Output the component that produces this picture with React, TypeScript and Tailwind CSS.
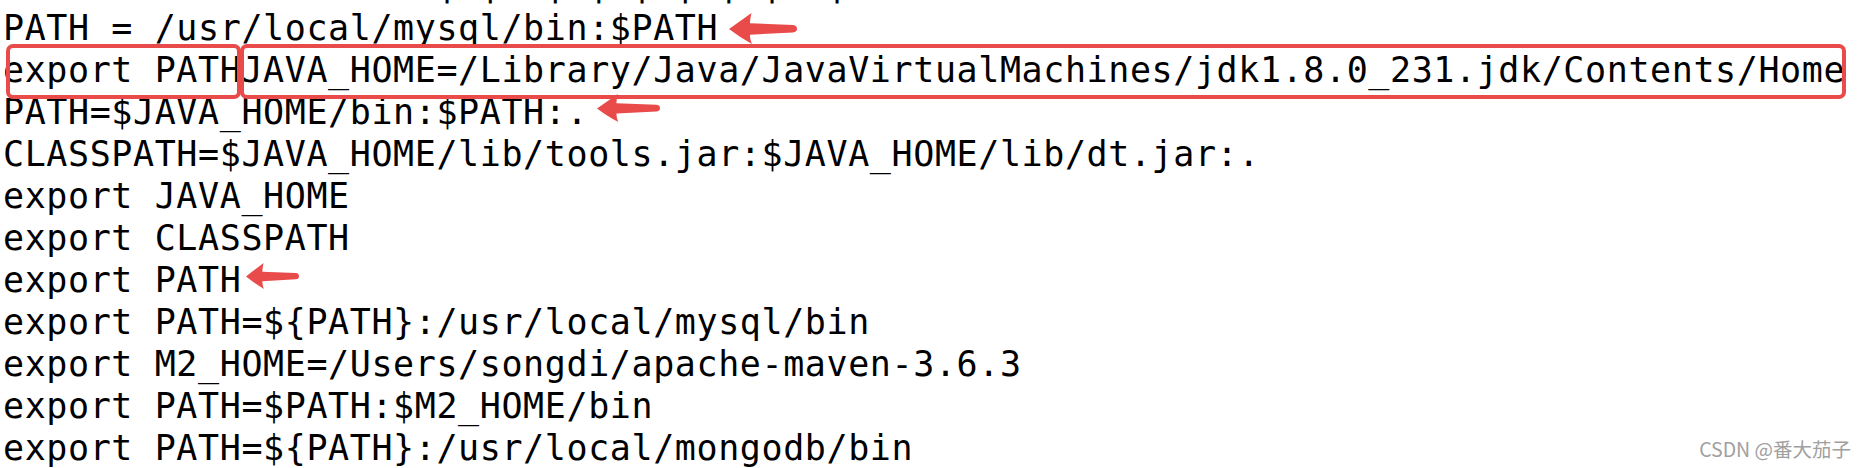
import React from "react";

const RED = "#e94b4b";

const Arrow: React.FC<{ w: number; h: number; className?: string }> = ({ w, h, className }) => (
  <svg
    width={w}
    height={h}
    viewBox="0 0 68 28"
    preserveAspectRatio="none"
    className={className}
  >
    <path
      d="M0 14.5 C7.5 9.5 15 5 22.5 0 C21.5 4 21 7 21 9.3 L64 10.8 Q68 11.2 68 14.2 Q68 17.2 64 17.6 L21 19.6 C21 22.2 21.5 25 23 28 C15 24 7.5 19.5 0 14.5 Z"
      fill={RED}
    />
  </svg>
);

// top line only shows its descenders, the rest is cut off by the frame
const cutLine = "                    | |  | | | | | |  |";

const App: React.FC = () => {
  return (
    <div className="relative h-[468px] w-[1866px] overflow-hidden bg-white text-black">
      <div className="-mt-[41px] whitespace-pre pl-[3px] font-['DejaVu_Sans_Mono',monospace] text-[35px] leading-[42px] tracking-[0.6px]">
        <div className="leading-[48px]">{cutLine}</div>
        <div>
          PATH = /usr/local/mysql/bin:$PATH
          <Arrow w={68} h={31} className="ml-[11px] inline-block align-[-4px]" />
        </div>
        <div>
          <span className="relative">
            export PATH
            <span className="absolute -top-[6px] -bottom-[9px] left-[3px] right-0 rounded-[7px] border-[4px] border-[#e94b4b]" />
          </span>
          <span className="relative">
            JAVA_HOME=/Library/Java/JavaVirtualMachines/jdk1.8.0_231.jdk/Contents/Home
            <span className="absolute -top-[6px] -bottom-[9px] -left-[1px] -right-[1px] rounded-[7px] border-[4px] border-[#e94b4b]" />
          </span>
        </div>
        <div>
          PATH=$JAVA_HOME/bin:$PATH:.
          <Arrow w={63} h={28} className="ml-[9px] inline-block align-[2px]" />
        </div>
        <div>CLASSPATH=$JAVA_HOME/lib/tools.jar:$JAVA_HOME/lib/dt.jar:.</div>
        <div>export JAVA_HOME</div>
        <div>export CLASSPATH</div>
        <div>
          export PATH
          <Arrow w={53} h={26} className="ml-[5px] inline-block align-[3px]" />
        </div>
        <div>export PATH=${"{"}PATH{"}"}:/usr/local/mysql/bin</div>
        <div>export M2_HOME=/Users/songdi/apache-maven-3.6.3</div>
        <div>export PATH=$PATH:$M2_HOME/bin</div>
        <div>export PATH=${"{"}PATH{"}"}:/usr/local/mongodb/bin</div>
      </div>
      <div className="absolute bottom-[6px] right-[15px] font-['Noto_Sans_CJK_SC',sans-serif] text-[19.5px] leading-[26px] text-[#a0a0a0]">
        CSDN @番大茄子
      </div>
    </div>
  );
};

export default App;
